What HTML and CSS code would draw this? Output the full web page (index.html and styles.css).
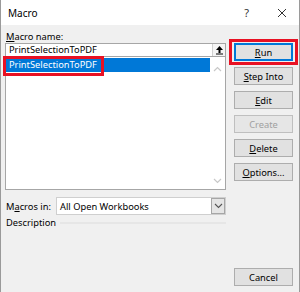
FILE: index.html
```html
<!DOCTYPE html>
<html>
<head>
<meta charset="utf-8">
<link rel="stylesheet" href="styles.css">
</head>
<body>
<div class="dialog">
  <div class="titlebar">
    <span class="title">Macro</span>
    <span class="help">?</span>
    <svg class="close" width="10" height="10" viewBox="0 0 10 10"><path d="M1 1L9 9M9 1L1 9" stroke="#333" stroke-width="1" fill="none"/></svg>
  </div>
  <div class="body">
    <div class="left">
      <div class="lbl"><u>M</u>acro name:</div>
      <div class="namebox">
        <span class="nametext">PrintSelectionToPDF</span>
        <span class="upbtn"><svg width="9" height="10" viewBox="0 0 9 10"><path d="M4.5 1L8 5H5.5V8H3.5V5H1Z" fill="#000"/><rect x="1" y="8.5" width="7" height="1" fill="#000"/></svg></span>
      </div>
      <div class="list">
        <div class="items">
          <div class="item sel">PrintSelectionToPDF</div>
        </div>
        <div class="scroll">
          <svg width="9" height="6" viewBox="0 0 9 6"><path d="M1 5L4.5 1.5L8 5" stroke="#c8c8c8" stroke-width="1.2" fill="none"/></svg>
          <svg width="9" height="6" viewBox="0 0 9 6"><path d="M1 1L4.5 4.5L8 1" stroke="#c8c8c8" stroke-width="1.2" fill="none"/></svg>
        </div>
      </div>
      <div class="inrow">
        <span class="inlbl">M<u>a</u>cros in:</span>
        <div class="combo">
          <span class="combotext">All Open Workbooks</span>
          <span class="drop"><svg width="9" height="6" viewBox="0 0 9 6"><path d="M1 1L4.5 4.5L8 1" stroke="#555" stroke-width="1.1" fill="none"/></svg></span>
        </div>
      </div>
      <div class="desc">
        <span class="desclbl">Description</span>
        <span class="descline"></span>
      </div>
    </div>
    <div class="right">
      <div class="btn default"><u>R</u>un</div>
      <div class="btn"><u>S</u>tep Into</div>
      <div class="btn"><u>E</u>dit</div>
      <div class="btn disabled">Create</div>
      <div class="btn"><u>D</u>elete</div>
      <div class="btn"><u>O</u>ptions...</div>
      <div class="spacer"></div>
      <div class="btn">Cancel</div>
    </div>
  </div>
  <div class="mark mark-item"></div>
  <div class="mark mark-run"></div>
</div>
</body>
</html>
```
FILE: styles.css
```css
html, body {
  margin: 0;
  padding: 0;
  background: #f0f0f0;
}
body {
  width: 300px;
  height: 292px;
  overflow: hidden;
  font-family: "Noto Sans", "Open Sans", sans-serif;
  font-size: 9.3px;
  color: #000;
}
.dialog {
  position: relative;
  width: 300px;
  height: 292px;
  box-sizing: border-box;
  border-left: 1px solid #9a9a9a;
  border-right: 1px solid #9a9a9a;
  background: #f0f0f0;
  display: flex;
  flex-direction: column;
}
.titlebar {
  height: 25px;
  background: #fff;
  display: flex;
  align-items: center;
  flex-shrink: 0;
}
.title {
  margin-left: 7px;
  font-size: 10px;
  flex: 1;
}
.help {
  font-size: 11px;
  color: #333;
  margin-right: 28px;
}
.close {
  margin-right: 12px;
}
.body {
  flex: 1;
  display: flex;
  gap: 8px;
  padding: 5px 5px 0 4px;
}
.left {
  width: 221px;
  display: flex;
  flex-direction: column;
}
.lbl {
  height: 13px;
  line-height: 13px;
  padding-left: 1px;
}
.namebox {
  height: 14px;
  box-sizing: border-box;
  border: 1px solid #a6a6a6;
  background: #fff;
  display: flex;
  align-items: center;
}
.nametext {
  flex: 1;
  padding-left: 3px;
  line-height: 12px;
}
.upbtn {
  width: 13px;
  height: 12px;
  box-sizing: border-box;
  border-left: 1px solid #d0d0d0;
  background: #f4f4f4;
  display: flex;
  align-items: center;
  justify-content: center;
}
.list {
  margin-top: -1px;
  height: 134px;
  box-sizing: border-box;
  border: 1px solid #a6a6a6;
  background: #fff;
  display: flex;
}
.items {
  flex: 1;
  padding-top: 1px;
}
.item {
  height: 14px;
  line-height: 14px;
  padding-left: 3px;
}
.sel {
  background: #0078d7;
  color: #fff;
}
.scroll {
  width: 15px;
  display: flex;
  flex-direction: column;
  justify-content: space-between;
  align-items: center;
  padding: 9px 0 5px;
}
.inrow {
  margin-top: 7px;
  display: flex;
  align-items: center;
}
.inlbl {
  width: 50px;
  padding-left: 1px;
}
.combo {
  flex: 1;
  height: 18px;
  box-sizing: border-box;
  border: 1px solid #cfcfcf;
  background: #fff;
  display: flex;
  align-items: center;
}
.combotext {
  flex: 1;
  padding-left: 3px;
}
.drop {
  width: 14px;
  height: 16px;
  box-sizing: border-box;
  border: 1px solid #a6a6a6;
  background: #e5e5e5;
  display: flex;
  align-items: center;
  justify-content: center;
}
.desc {
  margin-top: 1px;
  display: flex;
  align-items: center;
}
.desclbl {
  margin-right: 4px;
  padding-left: 1px;
}
.descline {
  flex: 1;
  height: 2px;
  background: #e6e6e6;
}
.right {
  width: 59px;
  display: flex;
  flex-direction: column;
  gap: 6px;
  padding-top: 13px;
  padding-bottom: 6px;
}
.btn {
  height: 18px;
  box-sizing: border-box;
  border: 1px solid #adadad;
  background: #e1e1e1;
  display: flex;
  align-items: center;
  justify-content: center;
  flex-shrink: 0;
}
.btn.default {
  border: 1px solid #0078d7;
  box-shadow: inset 0 0 0 1px #0078d7;
}
.btn.disabled {
  color: #a0a0a0;
  border-color: #bfbfbf;
  background: #e6e6e6;
}
.spacer {
  flex: 1;
}
.mark {
  position: absolute;
  border: 3px solid #e81123;
  box-sizing: border-box;
}
.mark-item {
  left: 2px;
  top: 56px;
  width: 101px;
  height: 20px;
}
.mark-run {
  left: 228px;
  top: 39px;
  width: 69px;
  height: 26px;
}
```
